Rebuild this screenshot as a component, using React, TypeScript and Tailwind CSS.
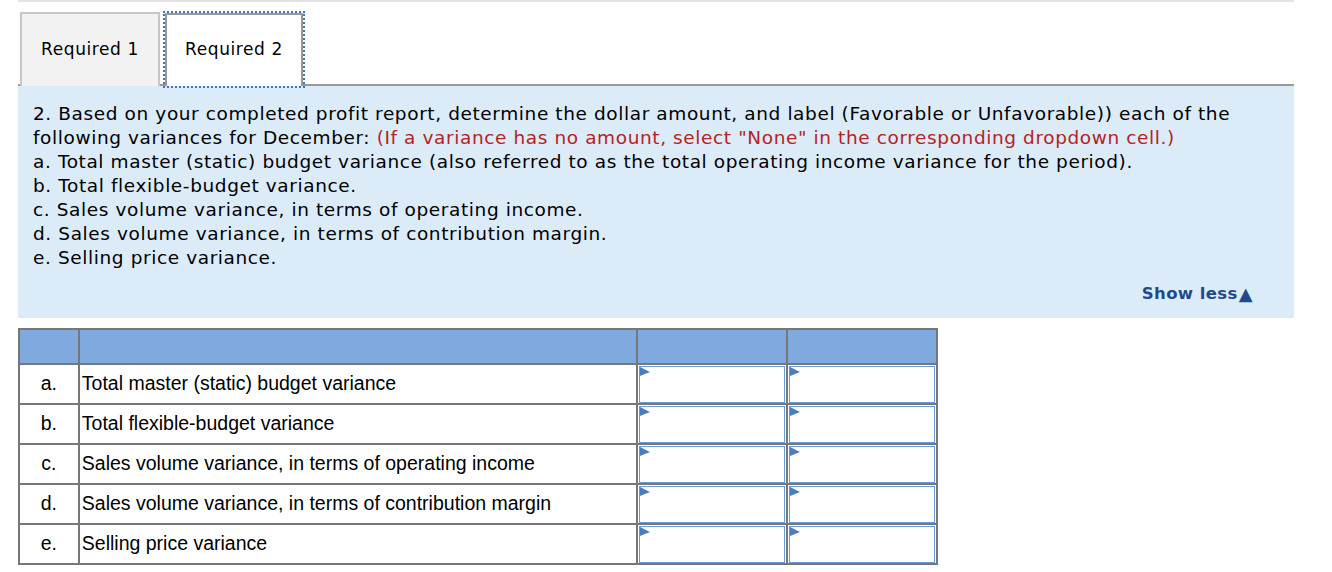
import React from "react";

const rows = [
    {key: "a.", label: "Total master (static) budget variance"},
    {key: "b.", label: "Total flexible-budget variance"},
    {key: "c.", label: "Sales volume variance, in terms of operating income"},
    {key: "d.", label: "Sales volume variance, in terms of contribution margin"},
    {key: "e.", label: "Selling price variance"},
];

function DropCell() {
    return (
        <td className="border-2 border-[#777] p-0 h-[40px]">
            <div className="relative mx-[1px] h-[37px] bg-white border border-[#6b9ad8]">
                {/* dropdown flag */}
                <svg className="absolute left-0 top-0" width="10" height="10" viewBox="0 0 10 10">
                    <polygon points="0,0 10,5 0,9" fill="#4a7cc0"/>
                </svg>
            </div>
        </td>
    );
}

export default function App() {
    return (
        <div className="w-[1332px] h-[572px] bg-white font-['DejaVu_Sans',Verdana,sans-serif] text-black">
            <div className="ml-[18px] w-[1276px]">
                <div className="h-[2px] bg-[#e4e4e4]"/>

                {/* tabs */}
                <div className="flex items-end h-[84px] pl-[2px] border-b-2 border-[#999]">
                    <div className="w-[140px] h-[74px] bg-[#f2f2f2] border-2 border-b-0 border-[#c6c6c6] flex items-center justify-center text-[17px] tracking-[0.6px] -mb-[2px]">
                        Required 1
                    </div>
                    <div className="ml-[5px] w-[138px] h-[73px] bg-white border-2 border-b-0 border-[#999] outline-2 outline-dotted outline-[#3f72c0] flex items-center justify-center text-[17px] tracking-[0.6px] -mb-[2px] pb-[2px]">
                        Required 2
                    </div>
                </div>

                {/* question panel */}
                <div className="bg-[#dcebf8] h-[232px] pt-[16px] pl-[15px] pr-[40px] text-[18.5px] tracking-[0.6px] leading-[24px]">
                    <div className="whitespace-nowrap">2. Based on your completed profit report, determine the dollar amount, and label (Favorable or Unfavorable)) each of the</div>
                    <div className="whitespace-nowrap">
                        following variances for December: <span className="text-[#b42323]">(If a variance has no amount, select "None" in the corresponding dropdown cell.)</span>
                    </div>
                    <div className="whitespace-nowrap">a. Total master (static) budget variance (also referred to as the total operating income variance for the period).</div>
                    <div>b. Total flexible-budget variance.</div>
                    <div>c. Sales volume variance, in terms of operating income.</div>
                    <div>d. Sales volume variance, in terms of contribution margin.</div>
                    <div>e. Selling price variance.</div>
                    <div className="flex justify-end mt-[12px] tracking-[0.4px]">
                        <span className="text-[16.5px] font-bold text-[#1f4b8a] mr-[1px] flex items-center">Show less<span className="text-[18px] leading-[20px] ml-[1px]">▲</span></span>
                    </div>
                </div>

                {/* answer table */}
                <table className="mt-[10px] border-collapse w-[920px] font-['Liberation_Sans',Arial,sans-serif] text-[19.5px]">
                    <colgroup>
                        <col className="w-[60px]"/>
                        <col className="w-[559px]"/>
                        <col className="w-[150px]"/>
                        <col className="w-[151px]"/>
                    </colgroup>
                    <thead>
                        <tr className="bg-[#80aadf] h-[35px]">
                            <th className="border-2 border-[#777]"/>
                            <th className="border-2 border-[#777]"/>
                            <th className="border-2 border-[#777]"/>
                            <th className="border-2 border-[#777]"/>
                        </tr>
                    </thead>
                    <tbody>
                        {rows.map((r) => (
                            <tr key={r.key} className="h-[40px]">
                                <td className="border-2 border-[#777] text-center">{r.key}</td>
                                <td className="border-2 border-[#777] pl-[2px] whitespace-nowrap">{r.label}</td>
                                <DropCell/>
                                <DropCell/>
                            </tr>
                        ))}
                    </tbody>
                </table>
            </div>
        </div>
    );
}
